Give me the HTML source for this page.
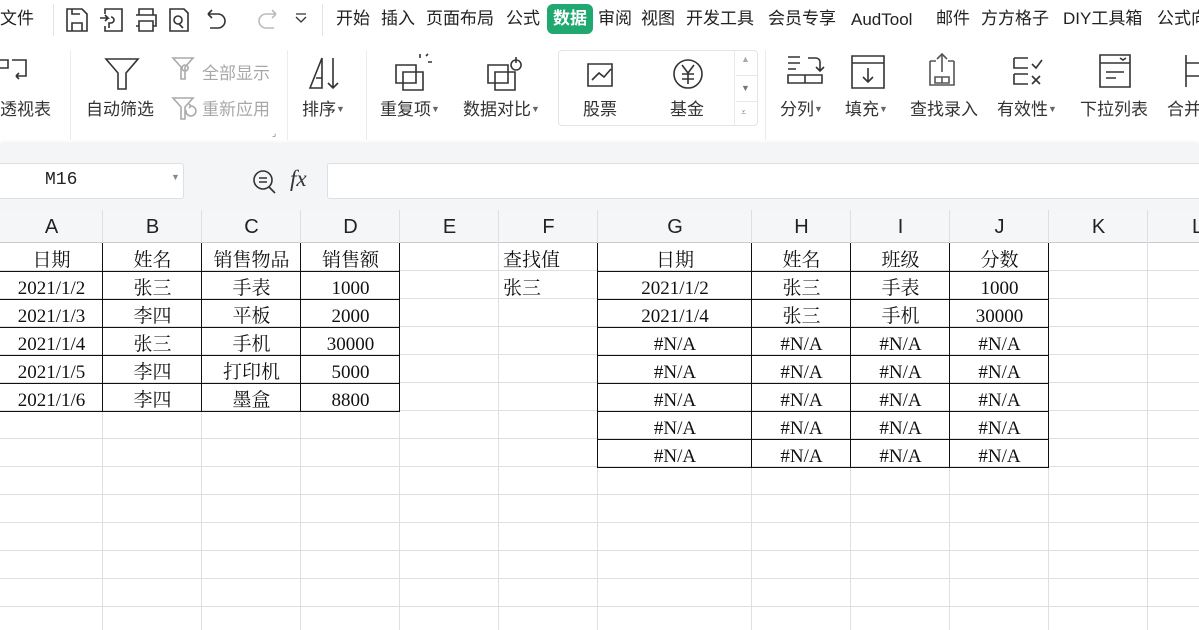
<!DOCTYPE html>
<html><head><meta charset="utf-8"><style>
*{margin:0;padding:0;box-sizing:border-box}
body{width:1199px;height:630px;overflow:hidden;background:#fff;position:relative;font-family:"Liberation Sans","Noto Sans CJK SC",sans-serif;color:#222}
.a{position:absolute;white-space:nowrap}
.tab{top:6px;font-size:17px;color:#222;line-height:26px;height:26px}
.lbl{top:95px;font-size:17px;color:#333}
.gr{color:#a8a8a8}
.ic{position:absolute}
.cell{position:absolute;height:28px;line-height:34px;font-family:"Liberation Serif","Noto Serif CJK SC",serif;font-size:19px;text-align:center;color:#111}
.vl{position:absolute;top:210px;width:1px;height:420px;background:#dcdfe4}
.bv{position:absolute;width:1px;background:#111}
.bh{position:absolute;height:1px;background:#111}
.ch{position:absolute;top:210px;height:33px;line-height:34px;font-size:20px;text-align:center;color:#222}
.dd{font-size:9px;color:#666;vertical-align:3px}
</style></head><body>
<div class="a tab" style="left:0">文件</div>
<div class="a" style="left:53px;top:4px;width:1px;height:32px;background:#e3e3e3"></div>
<svg class="ic" style="left:64px;top:5px" width="260" height="30" fill="none" stroke="#333" stroke-width="1.6">
<path d="M3 4h15l5 5v17H3z M8 26v-8h10v8 M8 4v5h8"/>
<path d="M41 9V4h17v22H41v-5 M36 13h8l-3-3 M44 13l-3 3 M47 12a3 3 0 1 1 0 6h-2v5"/>
<path d="M75 10V4h14v6 M72 10h20v11h-3 M75 21h-3 M75 16h14v10H75z"/>
<path d="M106 4h14l4 4v18h-18z M115 19l4 4 M114 15m-4 0a4 4 0 1 0 8 0a4 4 0 1 0-8 0"/>
<path d="M144 9h10a7 7 0 0 1 0 14h-8 M144 9l4-4 M144 9l4 4"/>
<path d="M212 9h-10a7 7 0 0 0 0 14h8 M212 9l-4-4 M212 9l-4 4" stroke="#bbb"/>
<path d="M232 12l5 5 5-5 M232 9h10" stroke-width="1.3"/>
</svg>
<div class="a" style="left:322px;top:4px;width:1px;height:32px;background:#e3e3e3"></div>
<div class="a tab" style="left:336px">开始</div>
<div class="a tab" style="left:381px">插入</div>
<div class="a tab" style="left:426px">页面布局</div>
<div class="a tab" style="left:506px">公式</div>
<div class="a" style="left:547px;top:4px;width:46px;height:30px;background:#1fa870;border-radius:6px;color:#fff;font-size:17px;line-height:30px;text-align:center;font-weight:bold">数据</div>
<div class="a tab" style="left:598px">审阅</div>
<div class="a tab" style="left:641px">视图</div>
<div class="a tab" style="left:686px">开发工具</div>
<div class="a tab" style="left:768px">会员专享</div>
<div class="a tab" style="left:851px;top:7px">AudTool</div>
<div class="a tab" style="left:936px">邮件</div>
<div class="a tab" style="left:981px">方方格子</div>
<div class="a tab" style="left:1063px">DIY工具箱</div>
<div class="a tab" style="left:1157px">公式向</div>
<svg class="ic" style="left:0;top:50px" width="1199" height="90" fill="none" stroke="#333" stroke-width="1.6">
<path d="M0 10h8v8H0 M12 10h14v7 M26 17v9h-10 M16 26l3-3 M16 26l3 3"/>
<path d="M106 9h32l-12 14v16h-8V23z"/>
<path d="M173 8h20l-8 9v12h-4V17z M185 15a3 3 0 1 0 0.1 0" stroke="#aaa"/>
<path d="M173 48h20l-8 9v12h-4V57z M186 60a5 5 0 1 0 5-4 M191 56l-2-2 M191 56l-2 2" stroke="#aaa"/>
<path d="M310 38l12-30v30z M316 28h6 M333 8v30 M328 33l5 5 5-5"/>
<path d="M396 15h20v18h-20z M403 22h20v18h-20z M420 4v4 M428 12h4 M426 6l2-2" />
<path d="M488 15h20v18h-20z M495 22h20v18h-20z M516 10a5 5 0 1 0 0.1 0 M516 7v6"/>
<path d="M588 14v22h24V14z M592 30l7-7 5 4 7-8"/>
<circle cx="688" cy="24" r="14"/><path d="M682 15l6 8 6-8 M682 24h12 M682 29h12 M688 23v11"/>
<path d="M788 7h12 M788 13h12 M788 19h8 M788 25h34v8h-34z M805 25v8 M808 8h8a4 4 0 0 1 4 4v8 M816 17l4 4 4-4"/>
<path d="M852 6h32v32h-32z M852 13h32 M868 18v14 M863 27l5 5 5-5"/>
<path d="M930 11h6 M948 11h6 M930 11v24h24V11 M935 27h14v6h-14z M942 27v6 M942 22V4 M937 9l5-5 5 5" stroke="#555"/>
<path d="M1014 8h14 M1014 8v10h14 M1014 24h14 M1014 24v10h14 M1032 14l4 4 6-8 M1032 26l8 8 M1040 26l-8 8"/>
<path d="M1100 5h30v32h-30z M1100 13h30 M1106 22h18 M1106 28h10 M1120 8l3 2 3-2"/>
<path d="M1186 5v32 M1186 13h13 M1186 26h13"/>
</svg>
<div class="a" style="left:70px;top:50px;width:1px;height:90px;background:#ececec"></div>
<div class="a" style="left:287px;top:50px;width:1px;height:90px;background:#ececec"></div>
<div class="a" style="left:366px;top:50px;width:1px;height:90px;background:#ececec"></div>
<div class="a" style="left:765px;top:50px;width:1px;height:90px;background:#ececec"></div>
<div class="a" style="left:558px;top:50px;width:200px;height:76px;border:1px solid #e4e4e4;border-radius:4px"></div>
<div class="a" style="left:734px;top:50px;width:1px;height:76px;background:#e8e8e8"></div>
<div class="a" style="left:736px;top:75px;width:22px;height:1px;background:#e8e8e8"></div>
<div class="a" style="left:736px;top:101px;width:22px;height:1px;background:#e8e8e8"></div>
<div class="a" style="left:741px;top:54px;font-size:9px;color:#aaa">▲</div>
<div class="a" style="left:741px;top:83px;font-size:9px;color:#777">▼</div>
<div class="a" style="left:741px;top:107px;font-size:9px;color:#777">⩡</div>
<div class="a gr" style="left:202px;top:59px;font-size:17px">全部显示</div>
<div class="a lbl" style="left:0">透视表</div>
<div class="a lbl" style="left:86px">自动筛选</div>
<div class="a lbl gr" style="left:202px">重新应用</div>
<div class="a lbl" style="left:302px">排序<span class="dd">▼</span></div>
<div class="a lbl" style="left:380px">重复项<span class="dd">▼</span></div>
<div class="a lbl" style="left:463px">数据对比<span class="dd">▼</span></div>
<div class="a lbl" style="left:583px">股票</div>
<div class="a lbl" style="left:670px">基金</div>
<div class="a lbl" style="left:780px">分列<span class="dd">▼</span></div>
<div class="a lbl" style="left:845px">填充<span class="dd">▼</span></div>
<div class="a lbl" style="left:910px">查找录入</div>
<div class="a lbl" style="left:997px">有效性<span class="dd">▼</span></div>
<div class="a lbl" style="left:1080px">下拉列表</div>
<div class="a lbl" style="left:1167px">合并</div>
<div class="a" style="left:272px;top:128px;font-size:9px;color:#777">⌟</div>
<div class="a" style="left:0;top:144px;width:1199px;height:66px;background:#f4f5f7;box-shadow:0 -2px 4px rgba(0,0,0,.06)"></div>
<div class="a" style="left:-2px;top:163px;width:186px;height:36px;background:#fff;border:1px solid #dcdfe4;border-radius:3px"></div>
<div class="a" style="left:45px;top:170px;font-family:'Liberation Mono',monospace;font-size:18px;color:#222">M16</div>
<div class="a" style="left:171px;top:172px;font-size:9px;color:#888">▼</div>
<svg class="ic" style="left:250px;top:167px" width="70" height="30" fill="none" stroke="#333" stroke-width="1.6"><circle cx="13" cy="13" r="9"/><path d="M19 20l6 6 M9 11h8 M9 15h8"/></svg>
<div class="a" style="left:290px;top:166px;font-family:'Liberation Serif',serif;font-style:italic;font-size:23px;color:#333">fx</div>
<div class="a" style="left:327px;top:163px;width:880px;height:36px;background:#fff;border:1px solid #dcdfe4;border-radius:3px"></div>
<div class="a" style="left:0;top:210px;width:1199px;height:33px;background:#f5f6f8;border-bottom:1px solid #c8ccd2"></div>
<div class="a" style="left:0;top:243px;width:1199px;height:387px;background:repeating-linear-gradient(to bottom,transparent 0,transparent 27px,#dcdfe4 27px,#dcdfe4 28px)"></div>
<div class="vl" style="left:102px"></div><div class="vl" style="left:201px"></div><div class="vl" style="left:300px"></div><div class="vl" style="left:399px"></div><div class="vl" style="left:498px"></div><div class="vl" style="left:597px"></div><div class="vl" style="left:751px"></div><div class="vl" style="left:850px"></div><div class="vl" style="left:949px"></div><div class="vl" style="left:1048px"></div><div class="vl" style="left:1147px"></div>
<div class="ch" style="left:0;width:103px">A</div><div class="ch" style="left:103px;width:99px">B</div><div class="ch" style="left:202px;width:99px">C</div><div class="ch" style="left:301px;width:99px">D</div><div class="ch" style="left:400px;width:99px">E</div><div class="ch" style="left:499px;width:99px">F</div><div class="ch" style="left:598px;width:154px">G</div><div class="ch" style="left:752px;width:99px">H</div><div class="ch" style="left:851px;width:99px">I</div><div class="ch" style="left:950px;width:99px">J</div><div class="ch" style="left:1049px;width:99px">K</div><div class="ch" style="left:1148px;width:99px">L</div>
<div class="bv" style="left:102px;top:243px;height:168px"></div><div class="bv" style="left:201px;top:243px;height:168px"></div><div class="bv" style="left:300px;top:243px;height:168px"></div><div class="bv" style="left:399px;top:243px;height:169px"></div>
<div class="bh" style="left:0;top:271px;width:400px"></div><div class="bh" style="left:0;top:299px;width:400px"></div><div class="bh" style="left:0;top:327px;width:400px"></div><div class="bh" style="left:0;top:355px;width:400px"></div><div class="bh" style="left:0;top:383px;width:400px"></div><div class="bh" style="left:0;top:411px;width:400px"></div>
<div class="bv" style="left:597px;top:243px;height:224px"></div><div class="bv" style="left:751px;top:243px;height:224px"></div><div class="bv" style="left:850px;top:243px;height:224px"></div><div class="bv" style="left:949px;top:243px;height:224px"></div><div class="bv" style="left:1048px;top:243px;height:225px"></div>
<div class="bh" style="left:597px;top:271px;width:452px"></div><div class="bh" style="left:597px;top:299px;width:452px"></div><div class="bh" style="left:597px;top:327px;width:452px"></div><div class="bh" style="left:597px;top:355px;width:452px"></div><div class="bh" style="left:597px;top:383px;width:452px"></div><div class="bh" style="left:597px;top:411px;width:452px"></div><div class="bh" style="left:597px;top:439px;width:452px"></div><div class="bh" style="left:597px;top:467px;width:452px"></div>
<div class="cell" style="left:0;top:244px;width:103px">日期</div><div class="cell" style="left:103px;top:244px;width:99px">姓名</div><div class="cell" style="left:202px;top:244px;width:99px">销售物品</div><div class="cell" style="left:301px;top:244px;width:99px">销售额</div>
<div class="cell" style="left:0;top:272px;width:103px">2021/1/2</div><div class="cell" style="left:103px;top:272px;width:99px">张三</div><div class="cell" style="left:202px;top:272px;width:99px">手表</div><div class="cell" style="left:301px;top:272px;width:99px">1000</div>
<div class="cell" style="left:0;top:300px;width:103px">2021/1/3</div><div class="cell" style="left:103px;top:300px;width:99px">李四</div><div class="cell" style="left:202px;top:300px;width:99px">平板</div><div class="cell" style="left:301px;top:300px;width:99px">2000</div>
<div class="cell" style="left:0;top:328px;width:103px">2021/1/4</div><div class="cell" style="left:103px;top:328px;width:99px">张三</div><div class="cell" style="left:202px;top:328px;width:99px">手机</div><div class="cell" style="left:301px;top:328px;width:99px">30000</div>
<div class="cell" style="left:0;top:356px;width:103px">2021/1/5</div><div class="cell" style="left:103px;top:356px;width:99px">李四</div><div class="cell" style="left:202px;top:356px;width:99px">打印机</div><div class="cell" style="left:301px;top:356px;width:99px">5000</div>
<div class="cell" style="left:0;top:384px;width:103px">2021/1/6</div><div class="cell" style="left:103px;top:384px;width:99px">李四</div><div class="cell" style="left:202px;top:384px;width:99px">墨盒</div><div class="cell" style="left:301px;top:384px;width:99px">8800</div>
<div class="cell" style="left:503px;top:244px;text-align:left">查找值</div>
<div class="cell" style="left:503px;top:272px;text-align:left">张三</div>
<div class="cell" style="left:598px;top:244px;width:154px">日期</div><div class="cell" style="left:752px;top:244px;width:99px">姓名</div><div class="cell" style="left:851px;top:244px;width:99px">班级</div><div class="cell" style="left:950px;top:244px;width:99px">分数</div>
<div class="cell" style="left:598px;top:272px;width:154px">2021/1/2</div><div class="cell" style="left:752px;top:272px;width:99px">张三</div><div class="cell" style="left:851px;top:272px;width:99px">手表</div><div class="cell" style="left:950px;top:272px;width:99px">1000</div>
<div class="cell" style="left:598px;top:300px;width:154px">2021/1/4</div><div class="cell" style="left:752px;top:300px;width:99px">张三</div><div class="cell" style="left:851px;top:300px;width:99px">手机</div><div class="cell" style="left:950px;top:300px;width:99px">30000</div>
<div class="cell" style="left:598px;top:328px;width:154px">#N/A</div><div class="cell" style="left:752px;top:328px;width:99px">#N/A</div><div class="cell" style="left:851px;top:328px;width:99px">#N/A</div><div class="cell" style="left:950px;top:328px;width:99px">#N/A</div>
<div class="cell" style="left:598px;top:356px;width:154px">#N/A</div><div class="cell" style="left:752px;top:356px;width:99px">#N/A</div><div class="cell" style="left:851px;top:356px;width:99px">#N/A</div><div class="cell" style="left:950px;top:356px;width:99px">#N/A</div>
<div class="cell" style="left:598px;top:384px;width:154px">#N/A</div><div class="cell" style="left:752px;top:384px;width:99px">#N/A</div><div class="cell" style="left:851px;top:384px;width:99px">#N/A</div><div class="cell" style="left:950px;top:384px;width:99px">#N/A</div>
<div class="cell" style="left:598px;top:412px;width:154px">#N/A</div><div class="cell" style="left:752px;top:412px;width:99px">#N/A</div><div class="cell" style="left:851px;top:412px;width:99px">#N/A</div><div class="cell" style="left:950px;top:412px;width:99px">#N/A</div>
<div class="cell" style="left:598px;top:440px;width:154px">#N/A</div><div class="cell" style="left:752px;top:440px;width:99px">#N/A</div><div class="cell" style="left:851px;top:440px;width:99px">#N/A</div><div class="cell" style="left:950px;top:440px;width:99px">#N/A</div>
</body></html>
